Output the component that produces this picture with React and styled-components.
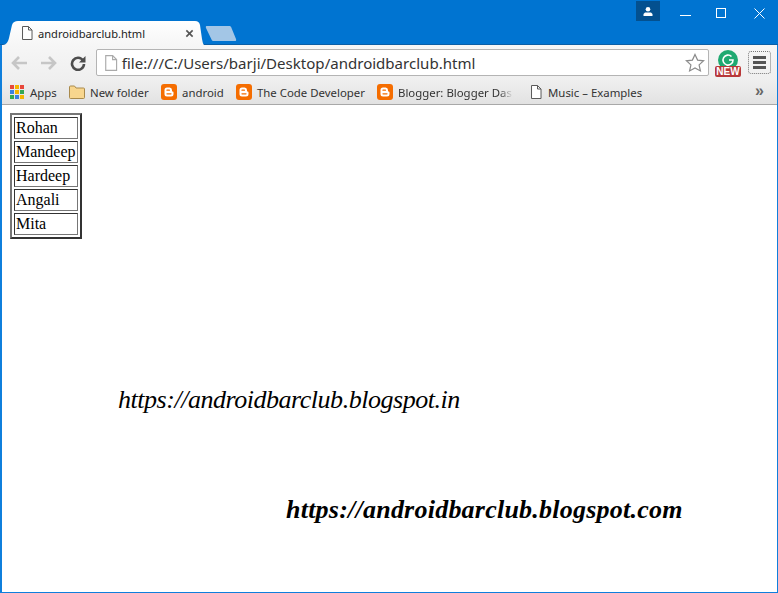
import React from "react";
import styled, { createGlobalStyle } from "styled-components";

const Global = createGlobalStyle`
  html, body { margin: 0; padding: 0; background: #fff; }
  #root { width: 778px; height: 593px; overflow: hidden; }
`;

const UI_FONT = `"Noto Sans", "Open Sans", sans-serif`;

const Window = styled.div`
  width: 778px;
  height: 593px;
  box-sizing: border-box;
  border: solid #0f7fdc;
  border-width: 0 1px 1px 2px;
  display: flex;
  flex-direction: column;
  background: #fff;
`;

const TitleBar = styled.div`
  height: 45px;
  margin: 0 -1px 0 -2px;
  background: #0074d1;
  border-bottom: 1px solid #0a5ea6;
  box-sizing: border-box;
  display: flex;
  justify-content: space-between;
  flex: none;
`;

const TabStrip = styled.div`
  display: flex;
  align-items: flex-end;
  padding-left: 3px;
`;

const Tab = styled.div`
  width: 202px;
  height: 24px;
  position: relative;
  display: flex;
  align-items: center;
  font: 11.1px ${UI_FONT};
  color: #222;
  margin-bottom: -1px;
`;

const TabShape = styled.svg`
  position: absolute;
  inset: 0;
`;

const TabContent = styled.div`
  position: relative;
  display: flex;
  align-items: center;
  padding-left: 18px;
  width: 100%;
  box-sizing: border-box;
`;

const TabTitle = styled.span`
  margin-left: 5px;
  width: 147px;
  white-space: nowrap;
`;

const NewTab = styled.svg`
  display: block;
  margin: 0 0 3px 0;
`;

const WindowControls = styled.div`
  display: flex;
  align-items: flex-start;
`;

const ProfileButton = styled.div`
  width: 24px;
  height: 20px;
  margin-top: 1px;
  background: #03508f;
  display: flex;
  align-items: center;
  justify-content: center;
`;

const ControlButton = styled.div`
  width: ${(p) => p.$width}px;
  height: 26px;
  box-sizing: border-box;
  padding-left: ${(p) => p.$inset || 0}px;
  display: flex;
  align-items: center;
  justify-content: center;
`;

const Toolbar = styled.div`
  height: 35px;
  flex: none;
  background: linear-gradient(#f6f6f6, #efefef);
  display: flex;
  align-items: center;
  padding-left: 8px;
`;

const NavIcon = styled.svg`
  display: block;
  margin-right: ${(p) => p.$gap}px;
`;

const Omnibox = styled.div`
  width: 613px;
  height: 27px;
  margin-left: 10px;
  box-sizing: border-box;
  background: #fff;
  border: 1px solid #b4b4b4;
  border-radius: 2px;
  display: flex;
  align-items: center;
  padding: 0 3px 0 7px;
`;

const Url = styled.span`
  flex: 1;
  margin-left: 4px;
  font: 15.05px ${UI_FONT};
  color: #333;
  white-space: nowrap;
`;

const Extension = styled.div`
  width: 26px;
  height: 26px;
  margin-left: 6px;
  position: relative;
  display: flex;
  justify-content: center;
`;

const NewBadge = styled.span`
  position: absolute;
  left: 0;
  bottom: -1px;
  width: 26px;
  height: 11px;
  background: #b8383a;
  border-radius: 2px;
  color: #fff;
  font: bold 10px/11px "Liberation Sans", sans-serif;
  text-align: center;
`;

const MenuButton = styled.div`
  width: 23px;
  height: 23px;
  margin-left: 7px;
  box-sizing: border-box;
  border: 1px dotted #777;
  border-radius: 3px;
  display: flex;
  flex-direction: column;
  justify-content: center;
  align-items: center;
  gap: 2px;
`;

const MenuBar = styled.i`
  display: block;
  width: 13px;
  height: 3px;
  background: #555;
`;

const BookmarkBar = styled.div`
  height: 25px;
  flex: none;
  box-sizing: border-box;
  background: linear-gradient(#efefef, #e2e2e2);
  border-bottom: 1px solid #a8a8a8;
  display: flex;
  align-items: center;
  padding-left: 8px;
  font: 11.4px ${UI_FONT};
  color: #333;
  white-space: nowrap;
`;

const Bookmark = styled.div`
  display: flex;
  align-items: center;
  gap: ${(p) => p.$gap || 6}px;
  flex: none;
  width: ${(p) => p.$width}px;
`;

const FadedLabel = styled.span`
  width: 115px;
  overflow: hidden;
  -webkit-mask-image: linear-gradient(to right, #000 88%, transparent);
  mask-image: linear-gradient(to right, #000 88%, transparent);
`;

const Chevron = styled.span`
  margin-left: 96px;
  padding-bottom: 3px;
  font: bold 16px "Liberation Sans", sans-serif;
  color: #666;
`;

const Page = styled.main`
  flex: 1;
  padding: 8px;
  font: 16px "Liberation Serif", serif;
  color: #000;
`;

const NameTable = styled.table`
  border-collapse: separate;
  border-spacing: 2px;
  border: 2px solid;
  border-color: #767676 #333 #333 #767676;
`;

const NameCell = styled.td`
  padding: 1px;
  width: 60px;
  border: 1px solid;
  border-color: #333 #767676 #767676 #333;
  color: #000;
`;

const Watermark = styled.div`
  margin-left: ${(p) => p.$left}px;
  margin-top: ${(p) => p.$top}px;
  font-family: "Liberation Serif", serif;
  font-style: italic;
  font-size: 26px;
  line-height: 32px;
  letter-spacing: ${(p) => p.$spacing}px;
  font-weight: ${(p) => (p.$bold ? 700 : 400)};
  color: #000;
  white-space: nowrap;
`;

const PageIcon = ({ size = 14, stroke = "#5a5a5a" }) => (
  <svg width={size * 0.86} height={size} viewBox="0 0 12 14">
    <path d="M1.5.5h6l3.5 3.5v9.5h-9.5z" fill="#fff" stroke={stroke} />
    <path d="M7.5.5v3.5h3.5" fill="none" stroke={stroke} />
  </svg>
);

const BloggerIcon = () => (
  <svg width="16" height="16" viewBox="0 0 16 16">
    <rect width="16" height="16" rx="3" fill="#f56d00" />
    <path
      d="M6 3.5h2.6A2.6 2.6 0 0 1 11 6v1c0 .4.3.6.7.6.5 0 .8.3.8.8V10a2.5 2.5 0 0 1-2.5 2.5H6A2.5 2.5 0 0 1 3.5 10V6A2.5 2.5 0 0 1 6 3.5z"
      fill="#fff"
    />
    <path d="M6 6.2h2.4M6 9.8h4" stroke="#f56d00" strokeWidth="1.3" strokeLinecap="round" />
  </svg>
);

const AppsIcon = () => {
  const colors = ["#e8483a", "#f4b400", "#e8483a", "#3b82e0", "#f4b400", "#34a853", "#34a853", "#3b82e0", "#f4b400"];
  return (
    <svg width="14" height="14" viewBox="0 0 14 14">
      {colors.map((c, i) => (
        <rect key={i} x={(i % 3) * 5} y={Math.floor(i / 3) * 5} width="4" height="4" fill={c} />
      ))}
    </svg>
  );
};

const FolderIcon = () => (
  <svg width="16" height="14" viewBox="0 0 16 14">
    <path d="M.5 2A1 1 0 0 1 1.5 1h4l1.5 2h7.500a1 1 0 0 1 1 1v8.500a1 1 0 0 1-1 1h-13a1 1 0 0 1-1-1z" fill="#f8d68e" stroke="#a98a4c" />
  </svg>
);

const bookmarks = [
  { label: "New folder", icon: <FolderIcon />, width: 92, gap: 5 },
  { label: "android", icon: <BloggerIcon />, width: 75, gap: 5 },
  { label: "The Code Developer", icon: <BloggerIcon />, width: 141, gap: 5 },
];

const names = ["Rohan", "Mandeep", "Hardeep", "Angali", "Mita"];

export default function App() {
  return (
    <>
      <Global />
      <Window>
        <TitleBar>
          <TabStrip>
            <Tab>
              <TabShape width="202" height="24" viewBox="0 0 202 24">
                <defs>
                  <linearGradient id="tabFill" x1="0" y1="0" x2="0" y2="1">
                    <stop offset="0" stopColor="#ffffff" />
                    <stop offset="1" stopColor="#f6f6f6" />
                  </linearGradient>
                </defs>
                <path d="M0 24C3 24 5 21 6 17L9 4C10 1 12 0 15 0H192C195 0 196 1 197 4L199 18C200 22 200 24 202 24Z" fill="url(#tabFill)" />
              </TabShape>
              <TabContent>
                <PageIcon />
                <TabTitle>androidbarclub.html</TabTitle>
                <svg width="9" height="9" viewBox="0 0 10 10">
                  <path d="M1.500 1.500l7 7M8.500 1.500l-7 7" stroke="#555" strokeWidth="1.800" />
                </svg>
              </TabContent>
            </Tab>
            <NewTab width="33" height="15" viewBox="0 0 33 15">
              <path d="M2 0H24C25.500 0 26 .5 26.500 2L31 13C31.500 14.500 31 15 30 15H9C7.500 15 7 14.500 6.500 13.500L1 2C.5.5 1 0 2 0Z" fill="#a3c6e6" />
            </NewTab>
          </TabStrip>
          <WindowControls>
            <ProfileButton>
              <svg width="10" height="9" viewBox="0 0 10 9">
                <circle cx="5" cy="2.300" r="2.300" fill="#fff" />
                <path d="M2 5.500h6l1.500 1.500v2H.5V7z" fill="#fff" />
              </svg>
            </ProfileButton>
            <ControlButton $width={42} $inset={8}>
              <svg width="11" height="10" viewBox="0 0 11 10">
                <path d="M0 7.500h11" stroke="#fff" />
              </svg>
            </ControlButton>
            <ControlButton $width={38}>
              <svg width="10" height="10" viewBox="0 0 10 10">
                <rect x=".5" y=".5" width="9" height="9" fill="none" stroke="#fff" />
              </svg>
            </ControlButton>
            <ControlButton $width={38}>
              <svg width="11" height="11" viewBox="0 0 11 11">
                <path d="M.5.5l10 10M10.500.5l-10 10" stroke="#fff" />
              </svg>
            </ControlButton>
          </WindowControls>
        </TitleBar>
        <Toolbar>
          <NavIcon width="18" height="16" viewBox="0 0 18 16" $gap={12}>
            <path d="M9 2L3 8l6 6M3 8h14" fill="none" stroke="#c6c6c6" strokeWidth="2.600" />
          </NavIcon>
          <NavIcon width="18" height="16" viewBox="0 0 18 16" $gap={12}>
            <path d="M9 2l6 6-6 6M15 8H1" fill="none" stroke="#c6c6c6" strokeWidth="2.600" />
          </NavIcon>
          <NavIcon width="16" height="16" viewBox="0 0 16 16" $gap={0}>
            <path d="M13 5.500A6 6 0 1 0 14 9" fill="none" stroke="#4d4d4d" strokeWidth="2.600" />
            <path d="M15.500 1v6.500H9z" fill="#4d4d4d" />
          </NavIcon>
          <Omnibox>
            <PageIcon size={16} stroke="#aaa" />
            <Url>file:///C:/Users/barji/Desktop/androidbarclub.html</Url>
            <svg width="20" height="20" viewBox="0 0 20 20">
              <path d="M10 1.500l2.600 5.600 6 .7-4.500 4.100 1.300 6-5.400-3-5.400 3 1.300-6L1.400 7.800l6-.7z" fill="#fff" stroke="#8a8a8a" strokeWidth="1.200" />
            </svg>
          </Omnibox>
          <Extension>
            <svg width="20" height="20" viewBox="0 0 20 20">
              <circle cx="10" cy="10" r="10" fill="#1fa971" />
              <path d="M13.500 6.500A5 5 0 1 0 15 10h-4" fill="none" stroke="#fff" strokeWidth="1.600" />
            </svg>
            <NewBadge>NEW</NewBadge>
          </Extension>
          <MenuButton>
            <MenuBar />
            <MenuBar />
            <MenuBar />
          </MenuButton>
        </Toolbar>
        <BookmarkBar>
          <Bookmark $width={59}>
            <AppsIcon />
            <span>Apps</span>
          </Bookmark>
          {bookmarks.map((b) => (
            <Bookmark key={b.label} $width={b.width} $gap={b.gap}>
              {b.icon}
              <span>{b.label}</span>
            </Bookmark>
          ))}
          <Bookmark $width={153} $gap={5}>
            <BloggerIcon />
            <FadedLabel>Blogger: Blogger Dash</FadedLabel>
          </Bookmark>
          <Bookmark $width={129}>
            <PageIcon />
            <span>Music – Examples</span>
          </Bookmark>
          <Chevron>»</Chevron>
        </BookmarkBar>
        <Page>
          <NameTable>
            <tbody>
              {names.map((n) => (
                <tr key={n}>
                  <NameCell>{n}</NameCell>
                </tr>
              ))}
            </tbody>
          </NameTable>
          <Watermark $left={108} $top={145} $spacing={-0.47}>https://androidbarclub.blogspot.in</Watermark>
          <Watermark $left={276} $top={78} $spacing={0.23} $bold>https://androidbarclub.blogspot.com</Watermark>
        </Page>
      </Window>
    </>
  );
}
